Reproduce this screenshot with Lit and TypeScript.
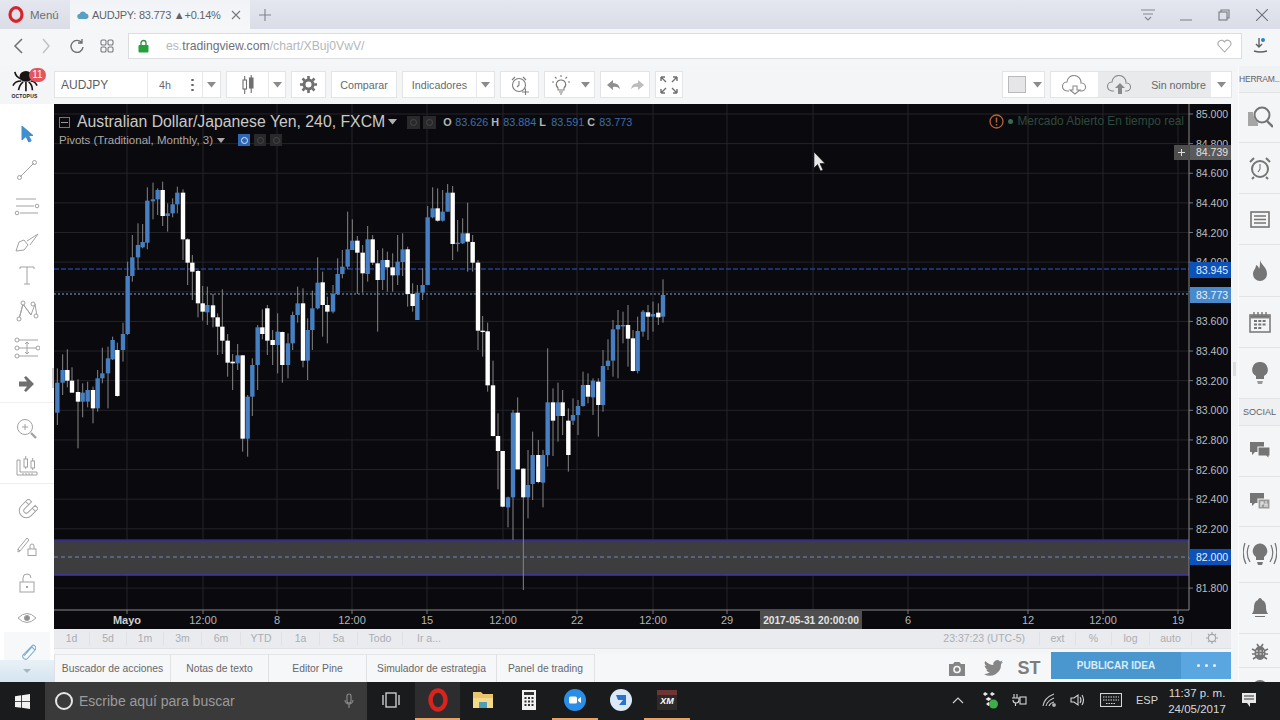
import { LitElement, html, css, svg } from "lit";
import { customElement } from "lit/decorators.js";
import { styleMap } from "lit/directives/style-map.js";

type C = [number, number, number, number, number, number];
// first crop: x=50+zx/3, y=170+zy/3. [zx, wickTop, wickBottom, bodyTop, bodyBottom, white?]
const A: C[] = [[22,595,765,638,728,0],[38,553,675,600,638,0],[52,538,652,600,632,1],[66,592,668,632,668,1],[84,628,835,666,695,1],[98,640,742,668,695,0],[113,635,712,660,695,0],[129,650,760,660,715,1],[143,600,725,625,715,0],[157,533,640,610,625,0],[174,530,715,565,610,0],[188,500,570,510,568,0],[202,518,680,540,678,1],[219,458,575,492,540,0],[233,275,495,318,492,0],[247,195,335,262,318,0],[264,160,300,225,262,0],[278,162,235,216,232,0],[292,52,238,92,218,0],[309,38,148,88,94,0],[323,55,135,60,88,0],[338,35,168,60,138,1],[353,100,185,130,138,0],[368,85,142,103,130,0],[382,50,130,68,103,0],[399,58,270,68,208,1],[413,205,345,208,278,1],[427,255,390,278,305,1],[444,300,442,303,400,1],[458,348,452,400,425,1],[472,350,465,405,427,0],[489,372,472,406,442,1],[503,430,555,442,470,1],[517,358,552,470,512,1],[533,492,620,512,578,1],[548,552,660,575,580,1],[563,522,600,556,580,0],[578,555,845,556,806,1],[593,675,860,680,806,0],[607,565,738,585,680,0],[623,465,660,472,585,0],[637,418,508,472,492,1],[652,405,555,415,512,1],[668,480,585,510,525,1],[683,430,610,485,525,0],[697,485,638,486,585,1],[714,490,625,520,585,0],[728,425,540,435,520,0],[743,350,458,400,435,0],[759,355,592,400,572,1],[773,445,630,480,572,0],[787,362,540,415,480,0],[803,262,418,338,415,0],[818,305,500,337,405,1],[832,380,520,405,425,1],[849,345,430,372,425,0],[863,265,375,312,372,0],[877,240,325,290,312,0],[893,125,298,238,290,0],[907,148,240,212,240,0],[922,198,372,212,248,1],[938,225,368,248,310,1],[953,168,335,208,312,0]];
// second crop: x=370+zx/3, y=170+zy/3
const B: C[] = [[8,195,285,208,278,1],[23,240,485,280,330,1],[38,235,360,270,330,0],[52,245,365,270,292,1],[68,250,365,292,316,1],[83,195,345,275,316,0],[98,190,318,238,276,0],[113,230,410,238,372,1],[128,340,425,372,408,1],[142,345,450,368,450,0],[158,295,390,345,368,0],[173,108,345,142,345,0],[188,52,145,115,142,0],[203,55,155,115,152,1],[218,60,155,125,152,0],[233,42,125,68,125,0],[248,48,270,68,222,1],[263,150,245,218,222,0],[278,145,222,190,220,0],[293,98,305,190,215,1],[308,195,305,216,278,1],[324,270,540,278,482,1],[338,438,560,482,480,1],[353,458,665,484,646,1],[369,572,800,646,798,1],[384,730,958,798,843,1],[398,845,1012,843,1010,1],[414,980,1072,982,1012,0],[429,720,1110,728,982,0],[443,682,898,728,898,1],[460,895,1260,896,982,1],[474,840,1045,945,982,0],[488,785,990,855,942,0],[505,810,940,855,936,1],[519,840,1012,855,938,0],[533,535,890,697,855,0],[549,655,858,697,752,1],[564,638,815,697,738,0],[578,660,795,697,738,1],[595,715,905,752,855,1],[609,685,765,735,752,0],[624,690,795,708,735,0],[639,605,710,645,708,0],[654,610,700,645,680,1],[669,625,735,632,682,0],[685,625,800,635,705,1],[699,540,725,588,705,0],[714,508,600,572,588,0],[729,450,620,478,572,0],[744,420,625,465,478,0],[759,425,520,465,468,0],[774,405,590,465,506,1],[789,480,605,505,603,1],[803,440,610,483,603,0],[819,420,500,425,485,0],[834,405,510,427,440,1],[849,395,485,432,440,0],[865,400,465,428,442,1],[879,328,458,375,440,0]];

const OX = 54, OY = 104;
const candle = (c: C, bx: number) => {
  const x = bx + c[0] / 3 - OX;
  const y = (v: number) => 170 + v / 3 - OY;
  const t = y(c[3]), h = Math.max(1.4, (c[4] - c[3]) / 3);
  return svg`<line x1=${x} x2=${x} y1=${y(c[1])} y2=${y(c[2])} stroke="#858585" stroke-width="1"/>
    <rect x=${x - 2.2} y=${t} width="4.4" height=${h} fill=${c[5] ? "#ffffff" : "#4680c2"}/>`;
};

const prices = ["85.000","84.800","84.600","84.400","84.200","84.000","83.800","83.600","83.400","83.200","83.000","82.800","82.600","82.400","82.200","82.000","81.800"];
const priceY = (i: number) => 114 + i * 29.63 - OY;
const times: [string, number, boolean][] = [["Mayo",127,true],["12:00",203,false],["8",277,false],["12:00",352,false],["15",427,false],["12:00",503,false],["22",577,false],["12:00",653,false],["29",727,false],["6",908,false],["12",1028,false],["12:00",1103,false],["19",1178,false]];

const I = {
  caret: html`<svg width="9" height="6" viewBox="0 0 9 6"><path d="M0 0h9L4.5 5.5z" fill="#8b8b8b"/></svg>`,
};
const ic = (w: number, h: number, body: unknown, vb?: string) =>
  html`<svg width=${w} height=${h} viewBox=${vb ?? `0 0 ${w} ${h}`} fill="none" stroke="#8f8f8f" stroke-width="1.1">${body}</svg>`;
const il = (w: number, h: number, body: unknown) =>
  html`<svg width=${w} height=${h} viewBox="0 0 ${w} ${h}" fill="none" stroke="#a2a2a2" stroke-width="1">${body}</svg>`;

const left: [unknown, number][] = [
  [il(14,18,svg`<path d="M2 1v14l4-3.500 2.800 5.500 2.400-1.200L8.500 10.500H13z" fill="#3f8ed0" stroke="#3f8ed0"/>`),36],
  [il(24,24,svg`<path d="M5 19L19 5"/><circle cx="4.500" cy="19.500" r="2"/><circle cx="19.500" cy="4.500" r="2"/>`),36],
  [il(26,20,svg`<path d="M2 3h20M2 10h18M6 17h18"/><circle cx="23" cy="10" r="1.800"/><circle cx="3" cy="17" r="1.800"/>`),36],
  [il(26,20,svg`<path d="M2 19l3-9 5-2 4 5-4 5zM13 9l11-7-8 11"/>`),36],
  [il(16,20,svg`<path d="M1 3V1h14v2M8 1v17M5 18h6"/>`),32],
  [il(24,24,svg`<path d="M4 20L8 5l8 11 4-11 2 12M8 5l-4 15M8 5l8 11"/><circle cx="8" cy="4" r="2" fill="#fff"/><circle cx="18" cy="5" r="2" fill="#fff"/><circle cx="4" cy="20" r="2" fill="#fff"/><circle cx="21" cy="17" r="2" fill="#fff"/>`),38],
  [il(26,22,svg`<path d="M4 3h20M4 11h20M4 19h20M13 5v12M11 7l2-2 2 2M11 15l2 2 2-2"/><circle cx="3" cy="3" r="2" fill="#fff"/><circle cx="3" cy="11" r="2" fill="#fff"/><circle cx="24" cy="11" r="2" fill="#fff"/><circle cx="3" cy="19" r="2" fill="#fff"/>`),36],
  [il(16,16,svg`<path d="M0 5.500h8L5 1.500 7 0l8 8-8 8-2-1.500 3-4H0z" fill="#707070" stroke="none"/>`),36],
];
const left2: [unknown, number][] = [
  [il(22,22,svg`<circle cx="9" cy="9" r="7.500"/><path d="M6 9h6M9 6v6"/><path d="M15 15l5 5" stroke-width="2.400"/>`),40],
  [il(24,22,svg`<path d="M2 5v15h20v-3H5V5zM8 20v-2M11 20v-2M14 20v-2M17 20v-2"/><rect x="9" y="4" width="3.500" height="8"/><rect x="16" y="6" width="3.500" height="7"/><path d="M10.700 1v3M10.700 12v2M17.700 3v3M17.700 13v2"/>`),34],
];
const left3: [unknown, number][] = [
  [il(22,22,svg`<g transform="rotate(45 11 11)"><path d="M4 2h4.500v10a2.500 2.500 0 0 0 5 0V2H18v10a7 7 0 0 1-14 0zM4 6h4.500M13.500 6H18"/></g>`),40],
  [il(20,22,svg`<path d="M1 14L10 3l2 2-9 11zM1 14v3l2-1"/><rect x="11" y="14" width="8" height="6.500"/><path d="M13 14v-3a2 2 0 0 1 4 0v3"/>`),32],
  [il(16,20,svg`<rect x="1" y="9" width="14" height="10"/><path d="M4 9V5a4 4 0 0 1 8 0"/><path d="M8 13v2" stroke-width="2"/>`),42],
  [il(20,14,svg`<path d="M1 7q9-9 18 0q-9 9-18 0z"/><circle cx="10" cy="7" r="2.600" fill="#8f8f8f"/>`),28],
];

const g = "#757575";
const right: [unknown, number, string?][] = [
  [html`HERRAM...`,27,"hd"],
  [ic(26,24,svg`<circle cx="15" cy="9" r="7.500" stroke=${g} stroke-width="2"/><path d="M20 15l6 6" stroke=${g} stroke-width="2.400"/><path d="M1 6h5v3l2 4 3 4v3H1z" fill="#a5a5a5" stroke="none"/>`),50],
  [ic(22,24,svg`<circle cx="11" cy="13" r="8" stroke=${g} stroke-width="2"/><path d="M11 8v5l-2 3" stroke=${g}/><path d="M1 6l4-4M21 6l-4-4M5 21l-2 2M17 21l2 2" stroke=${g} stroke-width="2"/>`),51],
  [ic(20,17,svg`<rect x="1" y="1" width="18" height="15" stroke=${g} stroke-width="1.600"/><path d="M4 5h12M4 8.500h12M4 12h12" stroke=${g} stroke-width="1.400"/>`),51],
  [ic(16,22,svg`<path d="M8 0c1 5 7 7 7 14a7 7 0 0 1-14 0c0-4 3-5 3-9 2 1 3 2 3 4 1-2 1-5 1-9z" fill=${g} stroke="none"/>`),52],
  [ic(22,22,svg`<rect x="1" y="4" width="20" height="17" stroke=${g} stroke-width="1.500"/><path d="M1 4h20v3H1z" fill=${g}/><path d="M5 1v4M9 1v4M13 1v4M17 1v4" stroke=${g} stroke-width="1.400"/><path d="M5 10h12M5 13.500h12M5 17h8" stroke=${g} stroke-width="2.200" stroke-dasharray="3 1.300"/>`),51],
  [ic(16,22,svg`<path d="M8 0a7.500 7.500 0 0 1 4 14v3H4v-3A7.500 7.500 0 0 1 8 0z" fill=${g} stroke="none"/><path d="M5 19h6l-1 3H6z" fill="#9a9a9a" stroke="none"/>`),51],
  [html`SOCIAL`,27,"lbl"],
  [ic(22,20,svg`<path d="M1 1h14v10H6l-3 3v-3H1z" fill=${g} stroke="none"/><path d="M9 6h12v9h-1v3l-3-3H9z" fill=${g} stroke="#f4f5f6"/>`),51],
  [ic(22,20,svg`<path d="M1 1h14v10H6l-3 3v-3H1z" fill=${g} stroke="none"/><path d="M9 7h12v10H9z" fill="#9a9a9a" stroke="#f4f5f6"/><path d="M12 15v-5h2v2h-2M16 15v-3h2v3M18 10h-2" stroke="#f0f0f0"/>`),50],
  [ic(34,26,svg`<path d="M11 5a7 7 0 0 1 12 0 7 7 0 0 1-2 10v3h-8v-3A7 7 0 0 1 11 5z" fill=${g} stroke="none"/><path d="M14 20h6l-1 3h-4z" fill=${g} stroke="none"/><path d="M6 3q-4 9 1 17M2 1q-4 11 1 21M28 3q4 9-1 17M32 1q4 11-1 21" stroke=${g} stroke-width="1.200"/>`),56],
  [ic(18,22,svg`<path d="M9 1c1 0 2 1 2 2 3 1 4 4 4 7 0 4 1 5 2 7H1c1-2 2-3 2-7 0-3 1-6 4-7 0-1 1-2 2-2zM4 19h10v1H4z" fill=${g} stroke="none"/>`),51],
  [ic(18,20,svg`<ellipse cx="9" cy="12" rx="5.500" ry="7" fill=${g} stroke="none"/><path d="M6 3l2 3M12 3l-2 3M1 8l4 2M17 8l-4 2M1 13h4M17 13h-4M2 18l3-2M16 18l-3-2" stroke=${g} stroke-width="1.600"/><path d="M5 10h8M5 13h8" stroke="#f4f5f6" stroke-dasharray="2 1.500"/>`),34],
  [ic(20,14,svg`<path d="M2 14a8 10 0 0 1 16 0" stroke=${g} stroke-width="2"/>`),14,"end"],
];

const ranges: [string, number][] = [["1d",36],["5d",37],["1m",37],["3m",38],["6m",39],["YTD",41],["1a",38],["5a",38],["Todo",45],["Ir a...",52]];
const tabs: [string, number][] = [["Buscador de acciones",117],["Notas de texto",98],["Editor Pine",98],["Simulador de estrategia",130],["Panel de trading",98]];

@customElement("app-root")
export class AppRoot extends LitElement {
  static styles = css`
    :host { display: block; width: 1280px; height: 720px; overflow: hidden; font-family: "Liberation Sans", Arial, sans-serif; background: #f4f5f6; }
    svg { display: block; flex: none; }
    .tabs { height: 29px; display: flex; align-items: center; background: linear-gradient(#e4e7ef, #dadde5); position: relative; }
    .menu { width: 70px; display: flex; align-items: center; gap: 6px; padding-left: 8px; box-sizing: border-box; font-size: 11.5px; color: #6c6f75; }
    .tab { width: 180px; height: 29px; background: linear-gradient(#f2f3f7,#f6f7f8); display: flex; align-items: center; box-sizing: border-box; padding: 0 9px 0 7px; gap: 3px; font-size: 11px; letter-spacing: -0.25px; color: #60646a; white-space: nowrap; }
    .tab .t { flex: 1; }
    .plus { margin-left: 8px; }
    .sp { flex: 1; }
    .win { display: flex; margin-right: -1px; gap: 0; }
    .win div { width: 38px; display: flex; justify-content: center; align-items: center; height: 29px; }
    .addr { height: 37px; background: #f5f6f8; display: flex; align-items: center; box-sizing: border-box; padding-bottom: 3px; }
    .nav { width: 128px; display: flex; align-items: center; padding-left: 13px; box-sizing: border-box; gap: 0; }
    .nav .n { width: 30px; display: flex; justify-content: flex-start; }
    .nav .n:last-child { margin-left: 2px; }
    .url { width: 1114px; height: 26px; background: #fff; border: 1px solid #dcdde0; box-sizing: border-box; display: flex; align-items: center; padding-left: 9px; font-size: 12.2px; color: #b4b7bb; }
    .url b { font-weight: normal; color: #6e7278; }
    .url > svg:first-child { margin-right: 17px; }
    .url .sp { flex: 1; }
    .url .heart { margin-right: 9px; }
    .dl { flex: 1; display: flex; justify-content: center; }
    .tv { display: flex; height: 616px; }
    .main { width: 1238px; display: flex; flex-direction: column; }
    .toolbar { height: 38px; display: flex; align-items: center; gap: 5px; padding: 0 6px 1px 0; box-sizing: border-box; background: #f4f5f6; }
    .logo { width: 49px; height: 37px; position: relative; display: flex; flex-direction: column; align-items: center; box-sizing: border-box; padding-top: 3px; }
    .logo span.o { font-size: 5px; font-weight: bold; color: #222; letter-spacing: .2px; }
    .badge { position: absolute; left: 29px; top: 2px; width: 17px; height: 14px; border-radius: 8px; background: #e2575e; color: #fff; font-size: 10px; line-height: 14px; text-align: center; }
    .grp { height: 27px; background: #fff; border: 1px solid #e3e4e6; box-sizing: border-box; display: flex; align-items: center; font-size: 10.7px; color: #66696e; flex: none; }
    .cell { height: 100%; display: flex; align-items: center; justify-content: center; box-sizing: border-box; flex: none; }
    .bl { border-left: 1px solid #e6e7e9; }
    .sym { font-size: 12px; justify-content: flex-start; padding-left: 6px; color: #5b5e63; }
    .shade { background: #e9eaec; }
    .nm { padding-left: 4px; }
    .body { height: 578px; display: flex; position: relative; }
    .body::after { content: ""; position: absolute; right: 2px; top: 258px; width: 3px; height: 14px; background: #dcdde0; }
    .lrail { width: 54px; background: #fff; display: flex; flex-direction: column; padding-top: 12px; box-sizing: border-box; position: relative; }
    .lrail::after { content: ""; position: absolute; right: 0; top: 264px; width: 2px; height: 20px; background: #cfd0d2; }
    .lr { display: flex; align-items: center; justify-content: center; flex: none; }
    .sepl { height: 1px; background: #eeeff1; margin: 0 0 6px; flex: none; }
    .clip { height: 28px; margin: 0 4px; padding-top: 12px; box-sizing: border-box; background: #f7f8f9; display: flex; align-items: center; justify-content: center; flex: none; }
    .fade { flex: 1; background: linear-gradient(#e9f1f7,#d4e4ef); display: flex; justify-content: center; padding-top: 9px; box-sizing: border-box; }
    .center { width: 1177px; display: flex; flex-direction: column; }
    .chart { height: 525px; background: #0a0a0e; position: relative; overflow: hidden; }
    .chart > svg { position: absolute; left: 0; top: 0; }
    .ttl { position: absolute; left: 5px; top: 9px; display: flex; align-items: center; height: 18px; color: #c9c9c9; font-size: 15.8px; white-space: nowrap; }
    .mini { width: 11px; height: 11px; border: 1px solid #777; box-sizing: border-box; position: relative; margin-right: 7px; }
    .mini::after { content: ""; position: absolute; left: 1px; right: 1px; top: 4px; height: 1px; background: #999; }
    .ttl > svg { margin-left: 3px; }
    .sq { width: 13px; height: 13px; background: #29292c; flex: none; margin-left: 3px; display: flex; align-items: center; justify-content: center; }
    .sq i { width: 5px; height: 5px; border: 1px solid #47474a; border-radius: 50%; display: block; }
    .sq.first { margin-left: 10px; }
    .ohlc { font-size: 10.8px; display: flex; margin-left: 7px; color: #b5b5b5; font-weight: bold; }
    .ohlc b { width: 12px; }
    .ohlc span { color: #3d6ea8; font-weight: normal; width: 36px; }
    .piv { position: absolute; left: 5px; top: 29px; height: 14px; display: flex; align-items: center; font-size: 11.5px; color: #a8a8a8; white-space: nowrap; }
    .piv > svg { margin-left: 4px; }
    .piv .sq { width: 12px; height: 12px; margin-left: 4px; }
    .piv .sq.first { margin-left: 13px; background: #2e66b4; }
    .piv .sq.first i { border-color: #dce8f6; }
    .status { position: absolute; right: 47px; top: 9px; height: 16px; display: flex; align-items: center; gap: 4px; font-size: 11.9px; color: #2e4a3c; white-space: nowrap; }
    .dot { width: 5px; height: 5px; background: #3a6b56; border-radius: 50%; }
    .range { height: 19px; background: #e9ebee; display: flex; align-items: center; font-size: 10.5px; color: #a9adb3; }
    .r { height: 13px; line-height: 13px; text-align: center; border-right: 1px solid #dfe1e4; box-sizing: border-box; flex: none; }
    .r.nb { border-right: none; }
    .r.tm { text-align: right; padding-right: 14px; }
    .stripe { height: 6px; background: #f4f5f6; flex: none; border-top: 1px solid #dfe1e4; box-sizing: border-box; }
    .bottom { height: 28px; display: flex; align-items: stretch; background: #f6f7f8; }
    .bt { border-right: 1px solid #dfe1e4; border-top: 1px solid #e3e5e8; display: flex; align-items: center; justify-content: center; font-size: 10.3px; color: #65686d; box-sizing: border-box; flex: none; white-space: nowrap; }
    .bt:first-child { border-left: 1px solid #dfe1e4; }
    .share { display: flex; align-items: center; gap: 0; }
    .share .st { font-size: 18px; color: #7d7d7d; font-weight: bold; width: 36px; text-align: center; }
    .share .s { width: 36px; display: flex; justify-content: center; }
    .pub { width: 180px; height: 27px; margin: -2px 0 0 4px; display: flex; background: #4e9cd7; color: #d9edf9; font-size: 10px; font-weight: bold; align-items: stretch; }
    .pub .a { width: 130px; display: flex; align-items: center; justify-content: center; background: #4a97d0; }
    .pub .d { flex: 1; background: #5aa6e0; display: flex; align-items: center; justify-content: center; gap: 5px; }
    .pub i { width: 3px; height: 3px; background: #e5f2fb; border-radius: 50%; display: block; }
    .rrail { width: 42px; display: flex; flex-direction: column; background: #f4f5f6; border-left: 1px solid #fbfbfc; box-sizing: border-box; overflow: hidden; }
    .rr { display: flex; align-items: center; justify-content: center; border-bottom: 1px solid #e2e3e5; box-sizing: border-box; flex: none; }
    .rr.hd { font-size: 8.5px; letter-spacing: -0.2px; color: #5f6267; white-space: nowrap; justify-content: flex-start; background: #f0f1f3; }
    .rr.lbl { font-size: 9px; color: #5f6267; background: #eff0f2; }
    .rr.end { border-bottom: none; align-items: flex-start; padding-top: 9px; }
    .task { height: 38px; background: #1a1b1d; display: flex; align-items: center; color: #d5d5d5; }
    .start { width: 45px; display: flex; justify-content: center; }
    .search { width: 322px; height: 38px; background: #3a3a3b; display: flex; align-items: center; padding-left: 9px; box-sizing: border-box; gap: 5px; font-size: 14px; color: #9a9a9a; flex: none; }
    .search .sp { flex: 1; }
    .search .mic { margin-right: 13px; }
    .tk { height: 38px; display: flex; align-items: center; justify-content: center; box-sizing: border-box; flex: none; border-bottom: 2px solid transparent; }
    .tk.on { border-bottom-color: #e7a15f; }
    .tk.op { background: #2d2d2f; }
    .tray { font-size: 11px; color: #d5d5d5; }
    .clock { width: 68px; font-size: 11.5px; line-height: 16px; text-align: center; color: #d8d8d8; flex: none; }
  `;

  render() {
    return html`
      <div class="tabs">
        <div class="menu">
          <svg width="16" height="17" viewBox="0 0 16 17"><ellipse cx="8" cy="8.500" rx="6" ry="6.800" fill="none" stroke="#d8232a" stroke-width="3.200"/></svg>Menú
        </div>
        <div class="tab">
          <svg width="12" height="10" viewBox="0 0 12 10"><path d="M3 9a2.500 2.500 0 0 1-.5-5A3.500 3.500 0 0 1 9 3.500 2.800 2.800 0 0 1 9.500 9z" fill="#5b9ec4"/></svg>
          <span class="t">AUDJPY: 83.773 ▲+0.14%</span>
          ${ic(10,10,svg`<path d="M1 1l8 8M9 1l-8 8" stroke="#77797d"/>`)}
        </div>
        <div class="plus">${ic(14,14,svg`<path d="M7 1v12M1 7h12" stroke="#808389"/>`)}</div>
        <div class="sp"></div>
        <div class="win">
          <div>${ic(14,12,svg`<path d="M0 1h14M2 5h10M4 8l3 3 3-3" stroke="#85888e"/>`)}</div>
          <div>${ic(12,12,svg`<path d="M0 11h12" stroke="#85888e"/>`)}</div>
          <div>${ic(12,12,svg`<rect x="1" y="3" width="8" height="8" stroke="#77797f"/><path d="M3 3V1h8v8H9" stroke="#77797f"/>`)}</div>
          <div>${ic(12,12,svg`<path d="M0 0l12 12M12 0L0 12" stroke="#6f7278"/>`)}</div>
        </div>
      </div>
      <div class="addr">
        <div class="nav">
          <div class="n">${ic(10,16,svg`<path d="M9 1L2 8l7 7" stroke="#6d7075" stroke-width="1.500"/>`)}</div>
          <div class="n">${ic(10,16,svg`<path d="M2 1l6 7-6 7" stroke="#c0c2c5" stroke-width="1.500"/>`)}</div>
          <div class="n">${ic(14,16,svg`<path d="M12 5A6 6 0 1 0 13 9M12 1v4H8" stroke="#6d7075" stroke-width="1.400"/>`)}</div>
          <div class="n">${ic(14,14,svg`<rect x="1" y="1" width="5" height="5" rx="1.300" stroke="#75787d"/><rect x="8" y="1" width="5" height="5" rx="1.300" stroke="#75787d"/><rect x="1" y="8" width="5" height="5" rx="1.300" stroke="#75787d"/><rect x="8" y="8" width="5" height="5" rx="1.300" stroke="#75787d"/>`)}</div>
        </div>
        <div class="url">
          <svg width="11" height="14" viewBox="0 0 11 14"><path d="M3 6V4a2.500 2.500 0 0 1 5 0v2" fill="none" stroke="#2f8d3d" stroke-width="1.300"/><rect x="0.500" y="6" width="10" height="7.500" rx="1" fill="#25a03a"/></svg>
          <span>es.<b>tradingview.com</b>/chart/XBuj0VwV/</span>
          <span class="sp"></span>
          <span class="heart">${ic(15,14,svg`<path d="M7.500 13L1.500 6.500a3.400 3.400 0 0 1 6-3.500 3.400 3.400 0 0 1 6 3.500z" stroke="#a9abae"/>`)}</span>
        </div>
        <div class="dl">${ic(16,18,svg`<path d="M6 1v9M3 7l3 3 3-3M1 14q6 2 13 0" stroke="#5d6066" stroke-width="1.400"/><circle cx="10" cy="3" r="2" fill="#2e7fd0" stroke="none"/>`)}</div>
      </div>
      <div class="tv">
        <div class="main">
          ${this.toolbar()}
          <div class="body">
            ${this.leftRail()}
            <div class="center">
              ${this.chart()}
              <div class="range">
                ${ranges.map(([t, w], i) => html`<div class="r ${i === 9 ? "nb" : ""}" style=${styleMap({ width: w + "px" })}>${t}</div>`)}
                <div class="sp"></div>
                <div class="r tm" style=${styleMap({ width: "100px" })}>23:37:23 (UTC-5)</div>
                ${[["ext",36],["%",36],["log",38],["auto",42]].map(([t, w]) => html`<div class="r" style=${styleMap({ width: w + "px" })}>${t}</div>`)}
                <div class="r nb" style=${styleMap({ width: "39px", display: "flex", justifyContent: "center" })}>${ic(12,12,svg`<circle cx="6" cy="6" r="3.600" stroke="#a0a4a9"/><path d="M6 0v2M6 10v2M0 6h2M10 6h2M2 2l1.400 1.400M8.600 8.600L10 10M10 2L8.600 3.400M3.400 8.600L2 10" stroke="#a0a4a9"/>`)}</div>
              </div>
              <div class="stripe"></div>
              <div class="bottom">
                ${tabs.map(([t, w]) => html`<div class="bt" style=${styleMap({ width: w + "px" })}>${t}</div>`)}
                <div class="sp"></div>
                <div class="share">
                  <div class="s"><svg width="18" height="15" viewBox="0 0 18 15"><path d="M1 3h4l1.500-2h5L13 3h4v12H1z" fill="#858585"/><circle cx="9" cy="8.500" r="3.800" fill="#f6f7f8"/><circle cx="9" cy="8.500" r="2.200" fill="#858585"/></svg></div>
                  <div class="s"><svg width="19" height="16" viewBox="0 0 19 16"><path d="M19 2c-.7.3-1.400.5-2.200.6.800-.5 1.400-1.200 1.700-2.100-.7.4-1.600.8-2.500.9A3.900 3.900 0 0 0 9.400 5C6.200 4.800 3.300 3.300 1.300.9a3.900 3.900 0 0 0 1.200 5.200c-.6 0-1.200-.2-1.800-.5 0 1.900 1.400 3.500 3.200 3.900-.6.2-1.200.2-1.800.1.500 1.600 2 2.700 3.700 2.700A8 8 0 0 1 0 14a11.100 11.100 0 0 0 17-9.900c.8-.6 1.500-1.300 2-2.100z" fill="#858585"/></svg></div>
                  <div class="st">ST</div>
                </div>
                <div class="pub"><div class="a">PUBLICAR IDEA</div><div class="d"><i></i><i></i><i></i></div></div>
              </div>
            </div>
          </div>
        </div>
        <div class="rrail">
          ${right.map(([b, h, k]) => html`<div class="rr ${k ?? ""}" style=${styleMap({ height: h + "px" })}>${b}</div>`)}
        </div>
      </div>
      ${this.taskbar()}
    `;
  }

  toolbar() {
    const w = (n: number) => styleMap({ width: n + "px" });
    return html`<div class="toolbar">
      <div class="logo">
        <svg width="28" height="24" viewBox="0 0 28 26" fill="none" stroke="#1c1414" stroke-width="1.800">
          <ellipse cx="15" cy="8" rx="6" ry="5" fill="#1c1414"/>
          <path d="M11 11Q4 9 3 3M10 13Q3 13 1 18M12 14Q8 17 7 23M15 14v10M18 14q4 3 4 9M20 13q5 0 7 5"/>
        </svg>
        <span class="o">OCTOPUS</span>
        <span class="badge">11</span>
      </div>
      <div class="grp" style=${w(167)}>
        <div class="cell sym" style=${w(92)}>AUDJPY</div>
        <div class="cell bl" style=${w(35)}>4h</div>
        <div class="cell" style=${w(20)}>${ic(3,14,svg`<path d="M1.500 1v2M1.500 6v2M1.500 11v2" stroke="#666" stroke-width="2.400"/>`)}</div>
        <div class="cell bl" style=${w(18)}>${I.caret}</div>
      </div>
      <div class="grp" style=${w(60)}>
        <div class="cell" style=${w(41)}>${ic(14,20,svg`<rect x="2" y="5" width="3.500" height="9" stroke="#6f6f6f"/><rect x="8.500" y="3" width="3.500" height="10" fill="#6f6f6f" stroke="#6f6f6f"/><path d="M3.700 1v4M3.700 14v5M10.200 0v3M10.200 13v5" stroke="#6f6f6f"/>`)}</div>
        <div class="cell bl" style=${w(17)}>${I.caret}</div>
      </div>
      <div class="grp" style=${w(35)}><div class="cell" style=${w(33)}>
        <svg width="17" height="17" viewBox="0 0 17 17"><circle cx="8.500" cy="8.500" r="4.500" fill="none" stroke="#707070" stroke-width="3"/><path d="M8.500 0v3M8.500 14v3M0 8.500h3M14 8.500h3M2.500 2.500l2 2M12.500 12.500l2 2M14.500 2.500l-2 2M4.500 12.500l-2 2" stroke="#707070" stroke-width="2.600"/></svg>
      </div></div>
      <div class="grp" style=${w(66)}><div class="cell" style=${w(64)}>Comparar</div></div>
      <div class="grp" style=${w(93)}>
        <div class="cell" style=${w(73)}>Indicadores</div>
        <div class="cell bl" style=${w(18)}>${I.caret}</div>
      </div>
      <div class="grp" style=${w(39)}><div class="cell" style=${w(37)}>${ic(20,20,svg`<circle cx="9" cy="10" r="6.500" stroke="#7c7c7c"/><path d="M9 6v4l-2 2M2 5l3-3M16 5l-3-3M12 17h7M15.500 13.500v7" stroke="#7c7c7c"/>`)}</div></div>
      <div class="grp" style=${w(51)}>
        <div class="cell" style=${w(32)}>${ic(18,20,svg`<path d="M9 5a4.500 4.500 0 0 1 3 8v2H6v-2a4.500 4.500 0 0 1 3-8zM7 17h4M8 19h2M9 0v2M2 7H0M18 7h-2M3 2l1.500 1.500M15 2l-1.500 1.500" stroke="#7c7c7c"/>`)}</div>
        <div class="cell" style=${w(17)}>${I.caret}</div>
      </div>
      <div class="grp" style=${w(50)}>
        <div class="cell" style=${w(24)}>${ic(13,10,svg`<path d="M0 5l6-5v3q6 0 7 6-3-3-7-2v3z" fill="#8f8f8f" stroke="none"/>`)}</div>
        <div class="cell" style=${w(24)}>${ic(13,10,svg`<path d="M13 5L7 0v3Q1 3 0 9q3-3 7-2v3z" fill="#bcbcbc" stroke="none"/>`)}</div>
      </div>
      <div class="grp" style=${w(28)}><div class="cell" style=${w(26)}>${ic(18,18,svg`<path d="M1 1l5 5M1 1v4M1 1h4M17 1l-5 5M17 1v4M17 1h-4M1 17l5-5M1 17v-4M1 17h4M17 17l-5-5M17 17v-4M17 17h-4" stroke="#6f6f6f" stroke-width="1.400"/>`)}</div></div>
      <div class="sp"></div>
      <div class="grp" style=${w(43)}>
        <div class="cell" style=${w(28)}><span style=${styleMap({ width: "16px", height: "15px", background: "#e6e6e8", border: "1px solid #b9b9bc", display: "block" })}></span></div>
        <div class="cell" style=${w(13)}>${I.caret}</div>
      </div>
      <div class="grp" style=${w(182)}>
        <div class="cell" style=${w(47)}>${ic(26,20,svg`<path d="M7 16H5a4.500 4.500 0 0 1 0-9 7 7 0 0 1 14 1 4 4 0 0 1 1 8h-2M11 11h4v4h3l-5 4-5-4h3z" stroke="#8a8a8a"/>`)}</div>
        <div class="cell shade" style=${w(44)}>${ic(26,20,svg`<path d="M7 16H5a4.500 4.500 0 0 1 0-9 7 7 0 0 1 14 1 4 4 0 0 1 1 8h-2" stroke="#8a8a8a"/><path d="M13 8l5 5h-3v6h-4v-6H8z" fill="#8a8a8a" stroke="none"/>`)}</div>
        <div class="cell shade nm" style=${w(69)}>Sin nombre</div>
        <div class="cell" style=${w(20)}>${I.caret}</div>
      </div>
    </div>`;
  }

  leftRail() {
    const it = (a: [unknown, number][]) => a.map(([b, h]) => html`<div class="lr" style=${styleMap({ height: h + "px" })}>${b}</div>`);
    return html`<div class="lrail">
      ${it(left)}<div class="sepl"></div>${it(left2)}<div class="sepl"></div>${it(left3)}
      <div class="clip"><svg width="18" height="20" viewBox="0 0 18 20" fill="none" stroke="#7fb0d4" stroke-width="1.100"><path d="M15 3L5 13a3 3 0 0 0 4 4l8-9-3-3-8 9M15 3a3 3 0 0 1 2 5"/></svg></div>
      <div class="fade"><svg width="8" height="4" viewBox="0 0 8 4"><path d="M0 0h8L4 4z" fill="#a9b6bf"/></svg></div>
    </div>`;
  }

  chart() {
    const W = 1177, H = 525;
    const vs = [73,149,223,298,373,449,523,599,673,759,854,974,1049,1124];
    return html`<div class="chart">
      <svg width=${W} height=${H} viewBox="0 0 ${W} ${H}">
        ${prices.map((_, i) => svg`<line x1="0" x2="1135" y1=${priceY(i)} y2=${priceY(i)} stroke="#242428"/>`)}
        ${vs.map((x) => svg`<line x1=${x} x2=${x} y1="0" y2="506" stroke="#242428"/>`)}
        <rect x="0" y="436" width="1135" height="35" fill="#3d3d3f"/>
        <line x1="0" x2="1135" y1="436" y2="436" stroke="#33299a" stroke-width="1.500"/>
        <line x1="0" x2="1135" y1="471" y2="471" stroke="#3f36a8" stroke-width="1.500"/>
        <line x1="0" x2="1135" y1="453" y2="453" stroke="#7488b4" stroke-dasharray="4 3"/>
        <line x1="0" x2="1135" y1="165" y2="165" stroke="#23408f" stroke-width="1.400" stroke-dasharray="5 2"/>
        <line x1="0" x2="1135" y1="190" y2="190" stroke="#7fa6d0" stroke-dasharray="2 2"/>
        ${A.map((c) => candle(c, 50))}
        ${B.map((c) => candle(c, 370))}
        <line x1="1135" x2="1135" y1="0" y2="506" stroke="#8a8a8a"/>
        <line x1="0" x2="1135" y1="506" y2="506" stroke="#8a8a8a"/>
        ${prices.map((p, i) => svg`<line x1="1135" x2="1139" y1=${priceY(i)} y2=${priceY(i)} stroke="#777"/><text x="1142" y=${priceY(i) + 4} font-size="10.500" fill="#bdbdbd" font-family="Liberation Sans">${p}</text>`)}
        ${times.map(([t, x, b]) => svg`<line x1=${x - OX} x2=${x - OX} y1="506" y2="510" stroke="#777"/><text x=${x - OX} y="520" font-size="11" text-anchor="middle" fill=${b ? "#d0d0d0" : "#b5b5b5"} font-weight=${b ? "bold" : "normal"} font-family="Liberation Sans">${t}</text>`)}
        ${[[166,"83.945","#0d52b8"],[191,"83.773","#4a8aca"],[453,"82.000","#0d52b8"]].map(([y, t, f]) => svg`<rect x="1136" y=${(y as number) - 8} width="41" height="16" fill=${f as string}/><text x="1142" y=${(y as number) + 4} font-size="10.500" fill="#e8f0fa" font-family="Liberation Sans">${t}</text>`)}
        <rect x="1120" y="41" width="15" height="15" fill="#4e4e4e"/>
        <path d="M1124 48.500h7M1127.500 45v7" stroke="#ddd"/>
        <rect x="1136" y="41" width="41" height="15" fill="#5a5a5a"/>
        <text x="1142" y="52" font-size="10.500" fill="#e0e0e0" font-family="Liberation Sans">84.739</text>
        <rect x="706" y="507" width="102" height="18" fill="#4e4e4e"/>
        <text x="757" y="520" font-size="10.200" fill="#e2e2e2" font-weight="bold" text-anchor="middle" font-family="Liberation Sans">2017-05-31 20:00:00</text>
        <path d="M760 48v16l3.500-3.500 3 6.500 2.500-1-3-6.500h5z" fill="#e8e8e8" stroke="#111" stroke-width=".6"/>
      </svg>
      <div class="ttl">
        <span class="mini"></span>Australian Dollar/Japanese Yen, 240, FXCM
        <svg width="9" height="6" viewBox="0 0 9 6"><path d="M0 0h9L4.500 5.500z" fill="#b0b0b0"/></svg>
        <span class="sq first"><i></i></span><span class="sq"><i></i></span>
        <div class="ohlc"><b>O</b><span>83.626</span><b>H</b><span>83.884</span><b>L</b><span>83.591</span><b>C</b><span>83.773</span></div>
      </div>
      <div class="piv">
        Pivots (Traditional, Monthly, 3)
        <svg width="8" height="5" viewBox="0 0 8 5"><path d="M0 0h8L4 5z" fill="#a8a8a8"/></svg>
        <span class="sq first"><i></i></span><span class="sq"><i></i></span><span class="sq"><i></i></span>
      </div>
      <div class="status">
        <svg width="15" height="15" viewBox="0 0 15 15"><circle cx="7.500" cy="7.500" r="6.500" fill="none" stroke="#b5643c" stroke-width="1.300"/><path d="M7.500 3.500v5M7.500 10v1.500" stroke="#b5643c" stroke-width="1.500"/></svg>
        <span class="dot"></span><span>Mercado Abierto En tiempo real</span>
      </div>
    </div>`;
  }

  taskbar() {
    const w = (n: number, m = 0) => styleMap({ width: n + "px", marginLeft: m + "px" });
    return html`<div class="task">
      <div class="start"><svg width="15" height="15" viewBox="0 0 15 15"><path d="M0 2.200l6.200-.9v5.900H0zM7 1.200L15 0v7.200H7zM0 8h6.200v5.800L0 13zM7 8h8v7l-8-1.200z" fill="#f2f2f2"/></svg></div>
      <div class="search">
        <svg width="20" height="20" viewBox="0 0 20 20"><circle cx="10" cy="10" r="8" fill="none" stroke="#e6e6e6" stroke-width="2"/></svg>
        <span>Escribe aquí para buscar</span><span class="sp"></span>
        <span class="mic">${ic(10,16,svg`<rect x="3" y="1" width="4" height="9" rx="2" stroke="#8d8d8d"/><path d="M1 7a4 4 0 0 0 8 0M5 11v4" stroke="#8d8d8d"/>`)}</span>
      </div>
      <div class="tk" style=${w(48)}>${ic(18,16,svg`<rect x="4" y="1" width="10" height="14" stroke="#d8d8d8" stroke-width="1.300"/><path d="M1 3v10M17 3v10" stroke="#d8d8d8" stroke-width="1.300"/>`)}</div>
      <div class="tk op on" style=${w(45)}><svg width="20" height="24" viewBox="0 0 20 24"><ellipse cx="10" cy="12" rx="7.500" ry="9.500" fill="none" stroke="#d8241c" stroke-width="4.500"/></svg></div>
      <div class="tk" style=${w(46)}><svg width="20" height="18" viewBox="0 0 20 18"><path d="M0 1h8l2 2h10v14H0z" fill="#e9c46a"/><path d="M0 7h20v10H0z" fill="#f5d98a"/><rect x="6" y="11" width="8" height="6" fill="#4c9fb8"/></svg></div>
      <div class="tk" style=${w(46)}><svg width="14" height="20" viewBox="0 0 14 20"><rect width="14" height="20" fill="#f2f2f2"/><rect x="2" y="2" width="10" height="3" fill="#333"/><path d="M2.500 8h2M6 8h2M9.500 8h2M2.500 11.500h2M6 11.500h2M9.500 11.500h2M2.500 15h2M6 15h2M9.500 15h2" stroke="#333" stroke-width="2"/></svg></div>
      <div class="tk on" style=${w(46)}><svg width="22" height="22" viewBox="0 0 22 22"><circle cx="11" cy="11" r="11" fill="#2a8ee8"/><rect x="5" y="7.500" width="8" height="7" rx="1.500" fill="#fff"/><path d="M14 10l3-2v6l-3-2z" fill="#fff"/></svg></div>
      <div class="tk" style=${w(46)}><svg width="22" height="22" viewBox="0 0 22 22"><circle cx="11" cy="11" r="11" fill="#dbe9f8"/><path d="M6 6h10v10H9l4-5H8z" fill="#2874c9"/></svg></div>
      <div class="tk on" style=${w(46)}><svg width="26" height="22" viewBox="0 0 26 22"><rect x="3" y="1" width="20" height="20" fill="#2e2a2a"/><rect x="3" y="1" width="20" height="5" fill="#b04040" opacity=".5"/><text x="13" y="15" font-size="9" font-weight="bold" font-style="italic" text-anchor="middle" fill="#fff" font-family="Liberation Sans">XM</text></svg></div>
      <div class="sp"></div>
      <div class="tk" style=${w(24)}>${ic(12,8,svg`<path d="M1 7l5-5 5 5" stroke="#d0d0d0" stroke-width="1.200"/>`)}</div>
      <div class="tk" style=${w(24, 8)}><svg width="15" height="18" viewBox="0 0 15 18"><path d="M2 1l3 2-3 2-2-2zM9 1l3 2-3 2-2-2zM5.500 6l3 2-3 2-3-2zM5.500 11l2.500 2-2.500 2-2.500-2z" fill="#e8e8e8"/><circle cx="10.500" cy="13" r="4.500" fill="#3fae4a"/></svg></div>
      <div class="tk" style=${w(24, 5)}>${ic(16,14,svg`<path d="M3 1v4M6 1v4M1 5h7v2a3 3 0 0 1-6 0M4.500 10v3" stroke="#d5d5d5"/><rect x="9" y="4" width="6" height="7" stroke="#d5d5d5"/>`)}</div>
      <div class="tk" style=${w(24, 7)}>${ic(16,14,svg`<path d="M1 13Q2 5 12 1M4 13q1-5 8-8M7 13q1-3 5-4" stroke="#c5c5c5"/><circle cx="12" cy="12" r="1.500" fill="#c5c5c5"/>`)}</div>
      <div class="tk" style=${w(24, 4)}>${ic(16,14,svg`<path d="M1 5h3l4-3v10L4 9H1zM10 4q2 3 0 6M12 2q3 5 0 10" stroke="#d5d5d5"/>`)}</div>
      <div class="tk" style=${w(24, 9)}>${ic(22,14,svg`<rect x=".500" y=".500" width="21" height="13" stroke="#d5d5d5"/><path d="M3 4h16M3 7h16M6 10.500h10" stroke="#d5d5d5" stroke-dasharray="1.500 1"/>`)}</div>
      <div class="tk tray" style=${w(26, 11)}>ESP</div>
      <div class="clock" style=${styleMap({ marginLeft: "3px" })}>11:37 p. m.<br />24/05/2017</div>
      <div class="tk" style=${w(24, 6)}>${ic(16,16,svg`<path d="M1 1h14v10H9v4l-3-4H1z" fill="#e8e8e8" stroke="none"/><path d="M3 4h10M3 7h10" stroke="#333"/>`)}</div>
      <div style=${styleMap({ width: "19px" })}></div>
    </div>`;
  }
}
